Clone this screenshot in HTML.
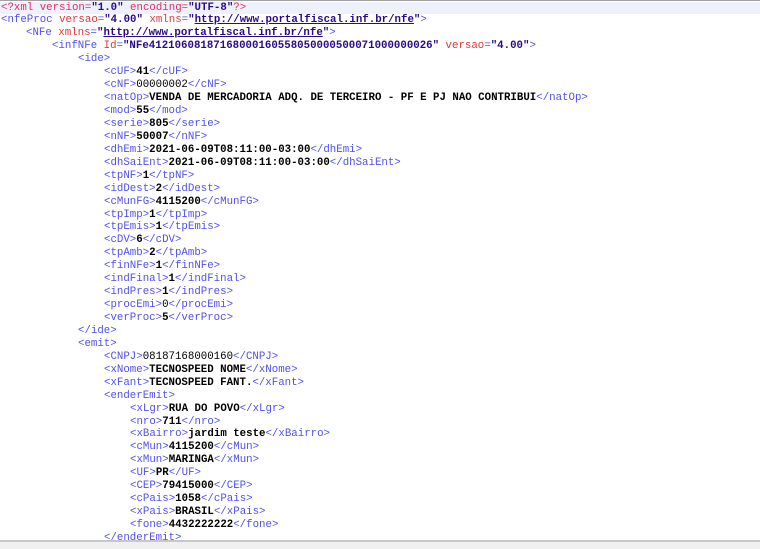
<!DOCTYPE html>
<html><head><meta charset="utf-8"><style>
html,body{margin:0;padding:0;background:#fff;width:760px;height:547px;overflow:hidden}
body{font-family:"Liberation Mono","Courier New",monospace;font-size:10.75px;}
.top{position:absolute;left:0;top:0;width:760px;height:1px;background:#a0a0a0}
.bot{position:absolute;left:0;top:540px;width:760px;height:7px;background:#f0f0f0;border-top:2px solid #c8c8c8}
.wrap{position:absolute;left:0;top:1.5px;width:760px}
.l{height:12.95px;line-height:12.95px;white-space:pre;color:#000}
.l0{background:#eef0fc}
.t{color:#5050ee}
.a{color:#e03838}
.v{color:#2a0a88;font-weight:bold}
.p{color:#e03060}
.u{text-decoration:underline}
b{font-weight:bold;color:#000}
</style></head><body>
<div class="top"></div>
<div class="wrap">
<div class="l l0" style="padding-left:1px"><span class="p">&lt;?xml version=</span><span class="v">"1.0"</span><span class="p"> encoding=</span><span class="v">"UTF-8"</span><span class="p">?&gt;</span></div>
<div class="l" style="padding-left:1px"><span class="t">&lt;nfeProc</span> <span class="a">versao</span><span class="t">=</span><span class="v">"4.00"</span> <span class="a">xmlns</span><span class="t">=</span><span class="v">"<span class="u">http://www.portalfiscal.inf.br/nfe</span>"</span><span class="t">&gt;</span></div>
<div class="l" style="padding-left:26px"><span class="t">&lt;NFe</span> <span class="a">xmlns</span><span class="t">=</span><span class="v">"<span class="u">http://www.portalfiscal.inf.br/nfe</span>"</span><span class="t">&gt;</span></div>
<div class="l" style="padding-left:52px"><span class="t">&lt;infNFe</span> <span class="a">Id</span><span class="t">=</span><span class="v">"NFe41210608187168000160558050000500071000000026"</span> <span class="a">versao</span><span class="t">=</span><span class="v">"4.00"</span><span class="t">&gt;</span></div>
<div class="l" style="padding-left:78px"><span class="t">&lt;ide&gt;</span></div>
<div class="l" style="padding-left:104px"><span class="t">&lt;cUF&gt;</span><b>41</b><span class="t">&lt;/cUF&gt;</span></div>
<div class="l" style="padding-left:104px"><span class="t">&lt;cNF&gt;</span>00000002<span class="t">&lt;/cNF&gt;</span></div>
<div class="l" style="padding-left:104px"><span class="t">&lt;natOp&gt;</span><b>VENDA DE MERCADORIA ADQ. DE TERCEIRO - PF E PJ NAO CONTRIBUI</b><span class="t">&lt;/natOp&gt;</span></div>
<div class="l" style="padding-left:104px"><span class="t">&lt;mod&gt;</span><b>55</b><span class="t">&lt;/mod&gt;</span></div>
<div class="l" style="padding-left:104px"><span class="t">&lt;serie&gt;</span><b>805</b><span class="t">&lt;/serie&gt;</span></div>
<div class="l" style="padding-left:104px"><span class="t">&lt;nNF&gt;</span><b>50007</b><span class="t">&lt;/nNF&gt;</span></div>
<div class="l" style="padding-left:104px"><span class="t">&lt;dhEmi&gt;</span><b>2021-06-09T08:11:00-03:00</b><span class="t">&lt;/dhEmi&gt;</span></div>
<div class="l" style="padding-left:104px"><span class="t">&lt;dhSaiEnt&gt;</span><b>2021-06-09T08:11:00-03:00</b><span class="t">&lt;/dhSaiEnt&gt;</span></div>
<div class="l" style="padding-left:104px"><span class="t">&lt;tpNF&gt;</span><b>1</b><span class="t">&lt;/tpNF&gt;</span></div>
<div class="l" style="padding-left:104px"><span class="t">&lt;idDest&gt;</span><b>2</b><span class="t">&lt;/idDest&gt;</span></div>
<div class="l" style="padding-left:104px"><span class="t">&lt;cMunFG&gt;</span><b>4115200</b><span class="t">&lt;/cMunFG&gt;</span></div>
<div class="l" style="padding-left:104px"><span class="t">&lt;tpImp&gt;</span><b>1</b><span class="t">&lt;/tpImp&gt;</span></div>
<div class="l" style="padding-left:104px"><span class="t">&lt;tpEmis&gt;</span><b>1</b><span class="t">&lt;/tpEmis&gt;</span></div>
<div class="l" style="padding-left:104px"><span class="t">&lt;cDV&gt;</span><b>6</b><span class="t">&lt;/cDV&gt;</span></div>
<div class="l" style="padding-left:104px"><span class="t">&lt;tpAmb&gt;</span><b>2</b><span class="t">&lt;/tpAmb&gt;</span></div>
<div class="l" style="padding-left:104px"><span class="t">&lt;finNFe&gt;</span><b>1</b><span class="t">&lt;/finNFe&gt;</span></div>
<div class="l" style="padding-left:104px"><span class="t">&lt;indFinal&gt;</span><b>1</b><span class="t">&lt;/indFinal&gt;</span></div>
<div class="l" style="padding-left:104px"><span class="t">&lt;indPres&gt;</span><b>1</b><span class="t">&lt;/indPres&gt;</span></div>
<div class="l" style="padding-left:104px"><span class="t">&lt;procEmi&gt;</span>0<span class="t">&lt;/procEmi&gt;</span></div>
<div class="l" style="padding-left:104px"><span class="t">&lt;verProc&gt;</span><b>5</b><span class="t">&lt;/verProc&gt;</span></div>
<div class="l" style="padding-left:78px"><span class="t">&lt;/ide&gt;</span></div>
<div class="l" style="padding-left:78px"><span class="t">&lt;emit&gt;</span></div>
<div class="l" style="padding-left:104px"><span class="t">&lt;CNPJ&gt;</span>08187168000160<span class="t">&lt;/CNPJ&gt;</span></div>
<div class="l" style="padding-left:104px"><span class="t">&lt;xNome&gt;</span><b>TECNOSPEED NOME</b><span class="t">&lt;/xNome&gt;</span></div>
<div class="l" style="padding-left:104px"><span class="t">&lt;xFant&gt;</span><b>TECNOSPEED FANT.</b><span class="t">&lt;/xFant&gt;</span></div>
<div class="l" style="padding-left:104px"><span class="t">&lt;enderEmit&gt;</span></div>
<div class="l" style="padding-left:130px"><span class="t">&lt;xLgr&gt;</span><b>RUA DO POVO</b><span class="t">&lt;/xLgr&gt;</span></div>
<div class="l" style="padding-left:130px"><span class="t">&lt;nro&gt;</span><b>711</b><span class="t">&lt;/nro&gt;</span></div>
<div class="l" style="padding-left:130px"><span class="t">&lt;xBairro&gt;</span><b>jardim teste</b><span class="t">&lt;/xBairro&gt;</span></div>
<div class="l" style="padding-left:130px"><span class="t">&lt;cMun&gt;</span><b>4115200</b><span class="t">&lt;/cMun&gt;</span></div>
<div class="l" style="padding-left:130px"><span class="t">&lt;xMun&gt;</span><b>MARINGA</b><span class="t">&lt;/xMun&gt;</span></div>
<div class="l" style="padding-left:130px"><span class="t">&lt;UF&gt;</span><b>PR</b><span class="t">&lt;/UF&gt;</span></div>
<div class="l" style="padding-left:130px"><span class="t">&lt;CEP&gt;</span><b>79415000</b><span class="t">&lt;/CEP&gt;</span></div>
<div class="l" style="padding-left:130px"><span class="t">&lt;cPais&gt;</span><b>1058</b><span class="t">&lt;/cPais&gt;</span></div>
<div class="l" style="padding-left:130px"><span class="t">&lt;xPais&gt;</span><b>BRASIL</b><span class="t">&lt;/xPais&gt;</span></div>
<div class="l" style="padding-left:130px"><span class="t">&lt;fone&gt;</span><b>4432222222</b><span class="t">&lt;/fone&gt;</span></div>
<div class="l" style="padding-left:104px"><span class="t">&lt;/enderEmit&gt;</span></div>
</div>
<div class="bot"></div>
</body></html>
